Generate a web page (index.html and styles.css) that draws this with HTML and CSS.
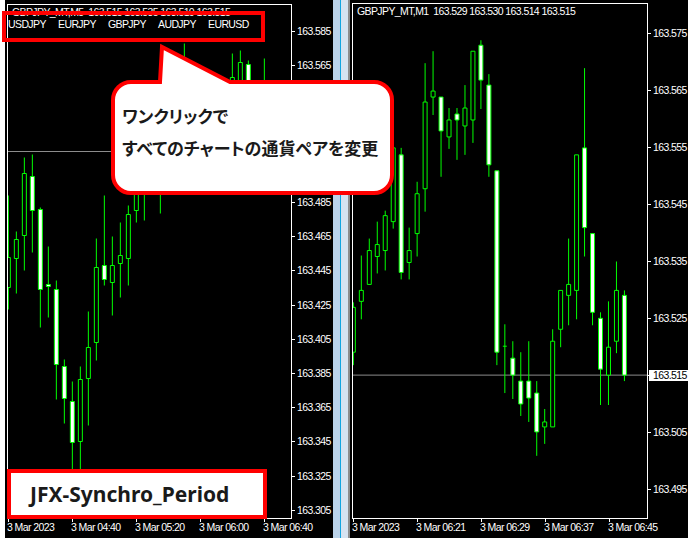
FILE: index.html
```html
<!DOCTYPE html>
<html lang="ja">
<head>
<meta charset="utf-8">
<title>JFX-Synchro_Period</title>
<link rel="stylesheet" href="styles.css">
</head>
<body>
<main class="terminal">
  <section class="chart chart-left">
    <div class="plot">
      <svg class="candles" viewBox="8 5 283 513" aria-hidden="true">
        <g transform="translate(.35 .5)">
          <line class="cross" x1="0" y1="151" x2="291" y2="151"/>
          <path class="wick" d="M8 195V309M16 231V293M24 157V270M32 154V252M40 207V327M48 246V317M56 280V399M64 359V423M72 381V470M80 366V470M88 311V425M96 238V360M104 195V285M112 236V315M120 222V297M128 205V285M136 170V222M144 170V220M160 170V213M184 43V80M232 53V85M240 50V85M248 60V85M264 58V85"/>
          <path class="up" d="M6 257H10V287H6ZM14 239H18V258H14ZM22 173H26V235H22ZM78 379H82V441H78ZM86 347H90V378H86ZM94 267H98V342H94ZM110 265H114V282H110ZM118 255H122V263H118ZM126 214H130V258H126ZM134 170H138V210H134ZM230 77H234V90H230ZM238 62H242V90H238Z"/>
          <path class="down" d="M30 176H34V210H30ZM38 209H42V289H38ZM46 284H50V286H46ZM54 289H58V364H54ZM62 366H66V398H62ZM70 401H74V442H70ZM102 265H106V279H102ZM246 64H250V90H246Z"/>
        </g>
      </svg>
      <div class="title title-left">GBPJPY_MT,M5&nbsp; 163.515 163.535 163.510 163.515</div>
      <div class="pairs">
        <span class="pair">USDJPY</span>
        <span class="pair">EURJPY</span>
        <span class="pair">GBPJPY</span>
        <span class="pair">AUDJPY</span>
        <span class="pair">EURUSD</span>
      </div>
    </div>
    <div class="prices prices-left">
      <span class="price">163.585</span>
      <span class="price">163.565</span>
      <span class="price">163.545</span>
      <span class="price">163.525</span>
      <span class="price">163.505</span>
      <span class="price">163.485</span>
      <span class="price">163.465</span>
      <span class="price">163.445</span>
      <span class="price">163.425</span>
      <span class="price">163.405</span>
      <span class="price">163.385</span>
      <span class="price">163.365</span>
      <span class="price">163.345</span>
      <span class="price">163.325</span>
      <span class="price">163.305</span>
    </div>
    <div class="times">
      <span class="time">3 Mar 2023</span>
      <span class="time">3 Mar 04:40</span>
      <span class="time">3 Mar 05:20</span>
      <span class="time">3 Mar 06:00</span>
      <span class="time">3 Mar 06:40</span>
    </div>
  </section>

  <div class="splitter">
    <span class="split-a"></span>
    <span class="split-line"></span>
    <span class="split-b"></span>
    <span class="split-edge"></span>
  </div>

  <section class="chart chart-right">
    <div class="plot">
      <svg class="candles" viewBox="353 4 295 514" aria-hidden="true">
        <g transform="translate(.35 .5)">
          <line class="cross" x1="350" y1="375" x2="648" y2="375"/>
          <path class="wick" d="M353 302V365M361 255V319M369 238V284M377 221V273M385 210V270M393 147V228M401 147V279M409 227V279M417 181V256M425 62V211M433 50V114M441 96V176M449 107V148M457 107V159M465 84V154M473 50V142M481 39V108M489 73V176M497 170V365M505 324V393M503 346H507M513 341V399M521 352V416M529 341V422M537 381V456M545 409V444M553 329V427M561 290V347M569 238V325M577 154V319M585 67V256M593 233V325M601 312V405M609 301V405M617 261V353M625 290V381"/>
          <path class="up" d="M351 307H355V352H351ZM359 290H363V301H359ZM367 250H371V284H367ZM375 244H379V256H375ZM383 215H387V250H383ZM391 147H395V221H391ZM407 250H411V262H407ZM415 193H419V233H415ZM423 101H427V188H423ZM431 90H435V96H431ZM447 119H451V136H447ZM463 107H467V125H463ZM471 50H475V119H471ZM543 422H547V427H543ZM551 341H555V427H551ZM559 290H563V329H559ZM567 284H571V295H567ZM575 154H579V290H575ZM607 347H611V375H607ZM615 290H619V341H615Z"/>
          <path class="down" d="M399 154H403V272H399ZM439 96H443V130H439ZM455 113H459V119H455ZM479 44H483V79H479ZM487 84H491V164H487ZM495 170H499V352H495ZM511 358H515V375H511ZM519 381H523V404H519ZM527 381H531V398H527ZM535 393H539V432H535ZM583 147H587V227H583ZM591 233H595V312H591ZM599 318H603V369H599ZM623 295H627V375H623Z"/>
        </g>
      </svg>
      <div class="title title-right">GBPJPY_MT,M1&nbsp; 163.529 163.530 163.514 163.515</div>
    </div>
    <div class="prices prices-right">
      <span class="price">163.575</span>
      <span class="price">163.565</span>
      <span class="price">163.555</span>
      <span class="price">163.545</span>
      <span class="price">163.535</span>
      <span class="price">163.525</span>
      <span class="price price-bid">163.515</span>
      <span class="price">163.505</span>
      <span class="price">163.495</span>
    </div>
    <div class="times">
      <span class="time">3 Mar 2023</span>
      <span class="time">3 Mar 06:21</span>
      <span class="time">3 Mar 06:29</span>
      <span class="time">3 Mar 06:37</span>
      <span class="time">3 Mar 06:45</span>
    </div>
  </section>
</main>

<div class="mark-pairs"></div>

<aside class="callout">
  <svg class="callout-shape" viewBox="111 40 283 155" aria-hidden="true">
    <path d="M160 82L162 47L230 82H374A18 18 0 0 1 392 100V175A18 18 0 0 1 374 193H131A18 18 0 0 1 113 175V100A18 18 0 0 1 131 82Z"/>
  </svg>
  <p class="callout-text">ワンクリックで<br>すべてのチャートの通貨ペアを変更</p>
</aside>

<div class="name-box">JFX-Synchro_Period</div>
</body>
</html>
```
FILE: styles.css
```css
* { box-sizing: border-box; }
html, body { margin: 0; height: 100%; overflow: hidden; background: #fff; }
body { position: relative; font-family: "Liberation Sans", sans-serif; }

.terminal {
  display: flex;
  width: 683px;
  height: 538px;
  margin-left: 5px;
  color: #fff;
  font-size: 10.5px;
  letter-spacing: -.6px;
}

.chart {
  display: grid;
  background: #000;
  padding-left: 2px;
}
.chart-left {
  width: 328px;
  padding-top: 4px;
  grid-template-columns: 285px 1fr;
  grid-template-rows: 515px 1fr;
}
.chart-right {
  width: 338px;
  padding-top: 3px;
  grid-template-columns: 296px 1fr;
  grid-template-rows: 516px 1fr;
}

.plot {
  position: relative;
  border: 1px solid #fff;
  overflow: hidden;
}
.candles { display: block; width: 100%; height: 100%; }
.wick { fill: none; stroke: #0f0; stroke-width: 1; }
.up { fill: #000; stroke: #0f0; stroke-width: 1; }
.down { fill: #fff; stroke: #0f0; stroke-width: 1; }
.cross { stroke: #8c8c8c; stroke-width: 1; }

.title {
  position: absolute;
  white-space: nowrap;
  line-height: 13px;
}
.title-left { left: 4px; top: 1px; }
.title-right { left: 4px; top: 1px; }

.pairs {
  position: absolute;
  left: 0;
  top: 13px;
  display: flex;
  line-height: 13px;
}
.pair { width: 50px; }

.prices { display: flex; flex-direction: column; }
.prices-left { padding-top: 10px; }
.prices-left .price { flex: 0 0 34.2px; }
.prices-right { padding-top: 1.5px; }
.prices-right .price { flex: 0 0 57px; }
.price {
  position: relative;
  display: flex;
  align-items: center;
  padding-left: 5px;
}
.price::before {
  content: "";
  position: absolute;
  left: 0;
  top: 50%;
  width: 3px;
  height: 1px;
  background: #fff;
}
.price-bid { color: #000; isolation: isolate; }
.price-bid::after {
  content: "";
  position: absolute;
  z-index: -1;
  left: 1px;
  top: 23px;
  width: 39px;
  height: 11px;
  background: #fff;
}

.times {
  grid-column: 1 / -1;
  display: flex;
  padding-top: 2px;
}
.time {
  position: relative;
  flex: 0 0 64px;
  white-space: nowrap;
  line-height: 13px;
}
.time::before {
  content: "";
  position: absolute;
  left: 1px;
  top: -2px;
  width: 1px;
  height: 3px;
  background: #fff;
}

.splitter { display: flex; flex: 0 0 17px; height: 538px; background: #fff; }
.split-a { flex: 0 0 7px; background: #bbd3ea; }
.split-line { flex: 0 0 1px; background: #12a5e0; }
.split-b { flex: 0 0 7px; background: #d6e3f1; }
.split-edge { flex: 0 0 2px; background: #8d8d8d; }

.mark-pairs {
  position: absolute;
  left: 2px;
  top: 11px;
  width: 263px;
  height: 31px;
  border: 4px solid #f00;
}

.callout {
  position: absolute;
  left: 111px;
  top: 40px;
  width: 283px;
  height: 155px;
  padding: 60px 0 0 11px;
}
.callout-shape { position: absolute; inset: 0; width: 100%; height: 100%; }
.callout-shape path { fill: #fff; stroke: #f00; stroke-width: 4; }
.callout-text {
  position: relative;
  margin: 0;
  color: #1a1a1a;
  font: 700 17px/32px "Noto Sans CJK JP", sans-serif;
  font-feature-settings: "palt";
  white-space: nowrap;
}

.name-box {
  position: absolute;
  left: 7px;
  top: 469px;
  width: 260px;
  height: 50px;
  padding: 0 0 0 19px;
  display: flex;
  align-items: center;
  background: #fff;
  border: 4px solid #f00;
  color: #1a1a1a;
  font: 700 21px "Noto Sans", sans-serif;
}
```
